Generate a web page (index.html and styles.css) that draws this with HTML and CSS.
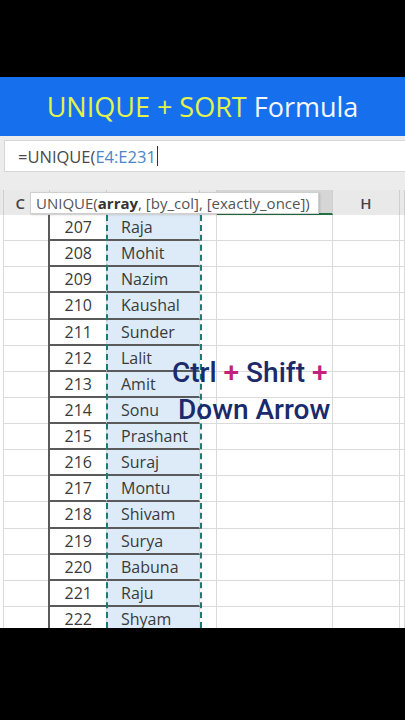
FILE: index.html
```html
<!DOCTYPE html>
<html lang="en">
<head>
    <meta charset="UTF-8">
    <meta name="viewport" content="width=device-width, initial-scale=1.0">
    <title>UNIQUE + SORT Formula</title>
    <link rel="stylesheet" href="styles.css">
</head>
<body>
    <div class="top-band"></div>
    <div class="banner">
        <h1><span class="hl">UNIQUE + SORT</span> Formula</h1>
    </div>
    <div class="formula-area">
        <div class="formula-bar">=UNIQUE(<span class="ref">E4:E231</span><span class="caret"></span></div>
    </div>
    <div class="spacer"></div>
    <div class="sheet">
        <div class="col-header">
            <div class="hc">C</div>
            <div class="hc"></div>
            <div class="hc"></div>
            <div class="hc"></div>
            <div class="hc hc-sel"></div>
            <div class="hc">H</div>
            <div class="hc"></div>
        </div>
        <div class="tooltip">UNIQUE(<b>array</b>, [by_col], [exactly_once])</div>
        <div class="rows" id="rows"></div>
        <div class="ants"></div>
        <div class="shortcut">
            <p>Ctrl <span class="plus">+</span> Shift <span class="plus">+</span></p>
            <p>Down Arrow</p>
        </div>
    </div>
    <div class="bottom-band"></div>
    <script>
        // names listed from row 207 onward
        const names = ['Raja', 'Mohit', 'Nazim', 'Kaushal', 'Sunder', 'Lalit', 'Amit', 'Sonu',
            'Prashant', 'Suraj', 'Montu', 'Shivam', 'Surya', 'Babuna', 'Raju', 'Shyam'];
        const rows = document.getElementById('rows');
        names.forEach((name, i) => {
            const row = document.createElement('div');
            row.className = 'row';
            row.innerHTML = '<div class="c"></div>' +
                '<div class="c num">' + (207 + i) + '</div>' +
                '<div class="c name">' + name + '</div>' +
                '<div class="c"></div><div class="c"></div><div class="c"></div><div class="c"></div>';
            rows.appendChild(row);
        });
    </script>
</body>
</html>
```

FILE: styles.css
```css
body {
    margin: 0;
    width: 405px;
    background-color: #000;
    font-family: "Open Sans", "Liberation Sans", sans-serif;
}
.top-band {
    height: 77px;
    background-color: #000;
}
.banner {
    height: 59px;
    background-color: #1670ee;
    display: flex;
    align-items: center;
    justify-content: center;
}
.banner h1 {
    margin: 0;
    font-size: 27px;
    font-weight: 400;
    color: #f4f7fb;
}
.hl {
    color: #e3f34a;
}
.formula-area {
    background-color: #ececec;
    padding: 4px 0 0 4px;
}
.formula-bar {
    height: 30px;
    background-color: #fff;
    border: 1px solid #d6d6d6;
    border-right: none;
    display: flex;
    align-items: center;
    padding-left: 13px;
    font-size: 16.5px;
    color: #4a4a4a;
}
.ref {
    color: #4a86c5;
}
.caret {
    display: inline-block;
    width: 1px;
    height: 20px;
    background-color: #333;
    margin-left: 1px;
}
.spacer {
    height: 18px;
    background-color: #ececec;
}
.sheet {
    position: relative;
    height: 438px;
    overflow: hidden;
    background-color: #fff;
}
.col-header,
.row {
    display: grid;
    grid-template-columns: 50px 57px 93px 17px 116px 67px 5px;
}
.col-header {
    height: 25px;
    background-color: #e9e9e9;
}
.hc {
    border-right: 1px solid #cfcfcf;
    display: flex;
    align-items: center;
    justify-content: center;
    font-size: 15px;
    font-weight: 600;
    color: #444;
}
.hc:first-child {
    border-left: 1px solid #cfcfcf;
    margin-left: 3px;
    justify-content: flex-end;
    padding-right: 24px;
}
.hc-sel {
    background-color: #d6d6d6;
    border-bottom: 2px solid #217346;
}
.tooltip {
    position: absolute;
    left: 30px;
    top: 2px;
    width: 282px;
    height: 20px;
    background-color: #fff;
    border: 1px solid #cfcfcf;
    box-shadow: 1px 1px 2px rgba(0, 0, 0, 0.15);
    font-size: 15px;
    line-height: 20px;
    color: #555;
    padding-left: 5px;
    white-space: nowrap;
    overflow: hidden;
}
.tooltip b {
    color: #333;
}
.row {
    height: 26.13px;
    box-sizing: border-box;
}
.c {
    border-bottom: 1px solid #dadada;
    border-right: 1px solid #dadada;
    font-size: 16px;
    color: #3a3a3a;
    display: flex;
    align-items: center;
    white-space: nowrap;
}
.c:first-child {
    border-left: 1px solid #dadada;
    margin-left: 3px;
}
.num {
    border-bottom: 2px solid #5a5a5a;
    border-left: 2px solid #5a5a5a;
    margin-left: -2px;
    justify-content: flex-end;
    padding-right: 14px;
}
.name {
    background-color: #ddebf8;
    border-bottom: 2px solid #5a5a5a;
    padding-left: 14px;
}
.ants {
    position: absolute;
    left: 106px;
    top: 25px;
    width: 92px;
    bottom: 0;
    border-left: 2px dashed #1e7b73;
    border-right: 2px dashed #1e7b73;
}
.shortcut {
    position: absolute;
    left: 172px;
    top: 164px;
    font-family: Roboto, "Liberation Sans", sans-serif;
    font-size: 28px;
    font-weight: 500;
    color: #1b2a6b;
    line-height: 37px;
}
.shortcut p {
    margin: 0;
}
.shortcut p:last-child {
    padding-left: 6px;
}
.plus {
    color: #c2217d;
}
.bottom-band {
    height: 92px;
    background-color: #000;
}
```
